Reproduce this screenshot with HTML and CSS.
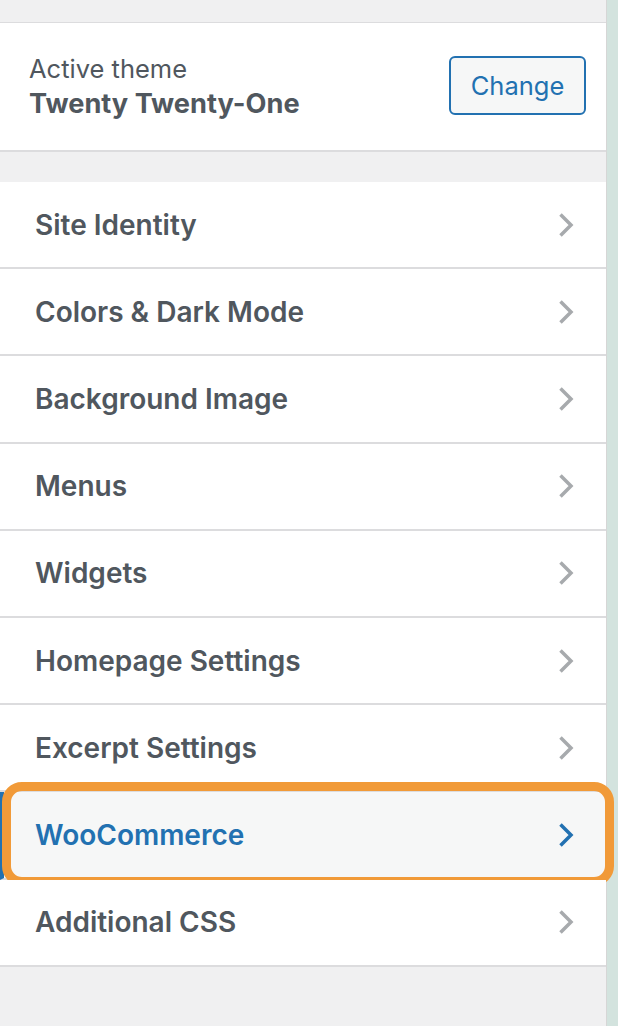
FILE: index.html
```html
<!DOCTYPE html>
<html lang="en">
<head>
<meta charset="utf-8">
<title>Customizer</title>
<link rel="stylesheet" href="styles.css">
</head>
<body>
<div class="page">
  <div class="panel">
    <div class="theme">
      <div class="theme-info">
        <div class="theme-label">Active theme</div>
        <div class="theme-name">Twenty Twenty-One</div>
      </div>
      <button class="change-btn">Change</button>
    </div>
    <ul class="sections">
      <li class="section"><span class="title">Site Identity</span><svg class="chev" viewBox="0 0 16 26"><polyline points="2.5,2.5 13,13 2.5,23.5"/></svg></li>
      <li class="section"><span class="title">Colors &amp; Dark Mode</span><svg class="chev" viewBox="0 0 16 26"><polyline points="2.5,2.5 13,13 2.5,23.5"/></svg></li>
      <li class="section"><span class="title">Background Image</span><svg class="chev" viewBox="0 0 16 26"><polyline points="2.5,2.5 13,13 2.5,23.5"/></svg></li>
      <li class="section"><span class="title">Menus</span><svg class="chev" viewBox="0 0 16 26"><polyline points="2.5,2.5 13,13 2.5,23.5"/></svg></li>
      <li class="section"><span class="title">Widgets</span><svg class="chev" viewBox="0 0 16 26"><polyline points="2.5,2.5 13,13 2.5,23.5"/></svg></li>
      <li class="section"><span class="title">Homepage Settings</span><svg class="chev" viewBox="0 0 16 26"><polyline points="2.5,2.5 13,13 2.5,23.5"/></svg></li>
      <li class="section"><span class="title">Excerpt Settings</span><svg class="chev" viewBox="0 0 16 26"><polyline points="2.5,2.5 13,13 2.5,23.5"/></svg></li>
      <li class="section active"><span class="title">WooCommerce</span><svg class="chev" viewBox="0 0 16 26"><polyline points="2.5,2.5 13,13 2.5,23.5"/></svg><span class="highlight"></span></li>
      <li class="section"><span class="title">Additional CSS</span><svg class="chev" viewBox="0 0 16 26"><polyline points="2.5,2.5 13,13 2.5,23.5"/></svg></li>
    </ul>
  </div>
  <div class="strip"></div>
</div>
</body>
</html>
```

FILE: styles.css
```css
* { box-sizing: border-box; }
html, body { margin: 0; padding: 0; }
body {
  background: #f0f0f1;
  font-family: Inter, "Noto Sans", "Liberation Sans", sans-serif;
  color: #50575e;
  width: 618px;
  height: 1026px;
  overflow: hidden;
}
.page {
  display: flex;
  height: 1026px;
}
.panel {
  width: 606px;
  padding-top: 22px;
}
.strip {
  width: 12px;
  background: #d3e3de;
  border-left: 1px solid #d6d6d6;
}
.theme {
  background: #fff;
  border-top: 1px solid #dcdcde;
  border-bottom: 2px solid #dcdcde;
  height: 130px;
  display: flex;
  align-items: center;
  justify-content: space-between;
  padding: 0 20px 2px 29px;
  margin-bottom: 30px;
}
.theme-label {
  font-size: 25.5px;
  line-height: 35px;
  font-weight: 400;
  color: #50575e;
}
.theme-name {
  font-size: 27.2px;
  line-height: 35px;
  font-weight: 700;
  color: #50575e;
}
.change-btn {
  width: 137px;
  height: 59px;
  border: 2px solid #2271b1;
  border-radius: 6px;
  background: #f6f7f7;
  color: #2271b1;
  font-family: inherit;
  font-size: 25.5px;
  padding: 0;
}
.sections {
  list-style: none;
  margin: 0;
  padding: 0;
}
.section {
  position: relative;
  height: 87.2px;
  background: #fff;
  border-bottom: 2px solid #dcdcde;
  display: flex;
  align-items: center;
  justify-content: space-between;
  padding: 0 32px 0 35px;
}
.title {
  font-size: 28px;
  font-weight: 600;
  color: #50575e;
}
.chev {
  width: 16px;
  height: 26px;
  fill: none;
  stroke: #a7aaad;
  stroke-width: 3.5;
}
.section.active {
  background: #f6f7f7;
  border-left: 4px solid #2271b1;
  padding-left: 31px;
}
.section.active .title { color: #2271b1; }
.section.active .chev { stroke: #2271b1; }
.highlight {
  position: absolute;
  left: -2px;
  right: -8px;
  top: -10px;
  bottom: -8px;
  border: 9px solid #f19a38;
  border-radius: 20px;
  pointer-events: none;
}
```
